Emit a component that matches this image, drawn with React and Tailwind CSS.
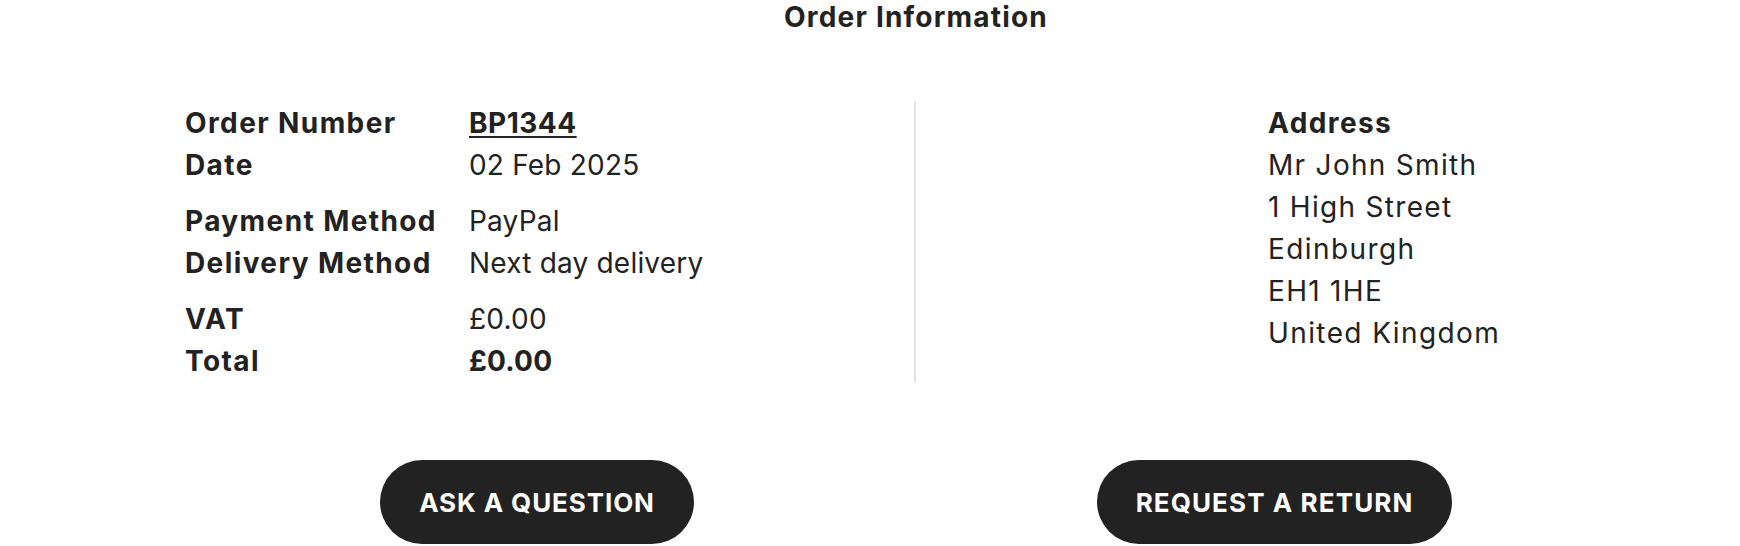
import React from "react";

const font = { fontFamily: "Inter, 'Noto Sans', sans-serif" };

function Row({ label, children, bold }) {
  return (
    <div className="grid grid-cols-[284px_1fr] leading-[42px]">
      <div className="font-bold tracking-[1.4px]">{label}</div>
      <div className={bold ? "font-bold tracking-[0.2px]" : "font-normal tracking-[0.2px]"}>{children}</div>
    </div>
  );
}

export default function App() {
  return (
    <div className="w-[1740px] h-[546px] bg-white text-[#222222] overflow-hidden" style={font}>
      <div className="pl-[158px] pr-[66px]">
        <h2 className="text-center text-[28px] leading-[34px] font-bold tracking-[1.2px]">Order Information</h2>

        <div className="mt-[67px] flex">
          <div className="w-[758px] border-r-2 border-[#e3e3e3] pl-[27px] pt-px text-[28px]">
            <div>
              <Row label="Order Number">
                <span className="font-bold tracking-[0.5px] underline decoration-2 underline-offset-[3px]">BP1344</span>
              </Row>
              <Row label="Date">02 Feb 2025</Row>
            </div>
            <div className="mt-[14px]">
              <Row label="Payment Method">PayPal</Row>
              <Row label="Delivery Method">Next day delivery</Row>
            </div>
            <div className="mt-[14px]">
              <Row label="VAT">£0.00</Row>
              <Row label="Total" bold>£0.00</Row>
            </div>
          </div>
          <div className="flex-1 pl-[352px] pt-px text-[28px] leading-[42px]">
            <div className="font-bold tracking-[1.4px]">Address</div>
            <div className="tracking-[1.3px]">Mr John Smith</div>
            <div className="tracking-[1.3px]">1 High Street</div>
            <div className="tracking-[1.4px]">Edinburgh</div>
            <div className="tracking-[1.3px]">EH1 1HE</div>
            <div className="tracking-[1.4px]">United Kingdom</div>
          </div>
        </div>

        <div className="mt-[78px] flex">
          <div className="w-[758px] flex justify-center">
            <button className="h-[84px] px-[39px] rounded-full bg-[#222222] text-white text-[26px] font-bold uppercase tracking-[0.9px]">
              Ask a question
            </button>
          </div>
          <div className="w-[717px] flex justify-center">
            <button className="h-[84px] px-[39px] rounded-full bg-[#222222] text-white text-[26px] font-bold uppercase tracking-[1.1px]">
              Request a return
            </button>
          </div>
        </div>
      </div>
    </div>
  );
}
